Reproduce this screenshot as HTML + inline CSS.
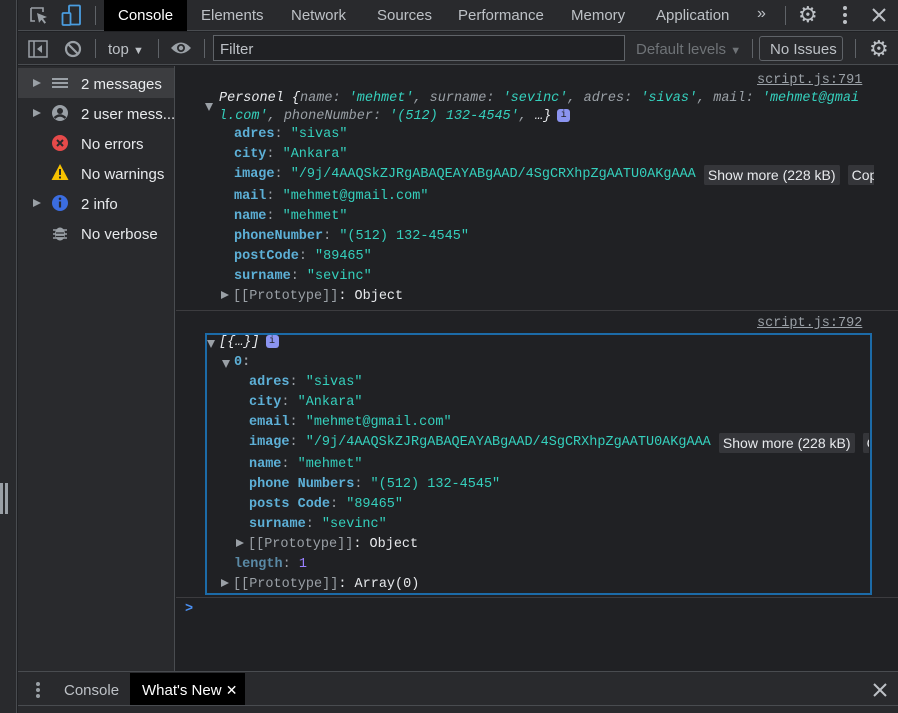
<!DOCTYPE html>
<html><head><meta charset="utf-8"><style>
*{margin:0;padding:0;box-sizing:border-box}
body{width:898px;height:713px;background:#202124;position:relative;overflow:hidden;font-family:"Liberation Sans",sans-serif;color:#e8eaed}
.a{position:absolute}
.ui{font-size:15px;color:#bdc1c6;white-space:nowrap}
.m{font-family:"Liberation Mono",monospace;font-size:13.5px;white-space:nowrap;line-height:20px;height:20px;position:absolute}
.k{color:#5db0d7;font-weight:bold}
.s{color:#35d0bd}
.p{color:#9aa0a6}
.w{color:#e8eaed}
.it{font-style:italic}
.kg{color:#9aa0a6;font-style:italic}
.tri{display:inline-block;width:0;height:0;border-left:4.5px solid transparent;border-right:4.5px solid transparent;border-top:8px solid #9aa0a6;margin-right:4px;vertical-align:middle}
.trr{display:inline-block;width:0;height:0;border-top:4.5px solid transparent;border-bottom:4.5px solid transparent;border-left:8px solid #9aa0a6;margin-right:4px;vertical-align:middle}
.btn{background:#35363a;color:#e8eaed;font-family:"Liberation Sans",sans-serif;font-size:14px;border-radius:3px;padding:2px 4px;display:inline-block;line-height:18px;vertical-align:top;margin-top:-1px}
.info{display:inline-block;width:13px;height:13px;background:#8b94f0;border-radius:3px;color:#202124;font-size:10px;text-align:center;line-height:13px;vertical-align:middle;font-family:"Liberation Mono",monospace;margin-left:6px}
</style></head><body>
<div class="a" style="left:0;top:0;width:17px;height:713px;background:#292a2d;border-right:1px solid #494c50"></div>
<div class="a" style="left:0;top:483px;width:3px;height:31px;background:#9aa0a6"></div>
<div class="a" style="left:5px;top:483px;width:3px;height:31px;background:#9aa0a6"></div>
<div class="a" style="left:18px;top:0;width:880px;height:31px;background:#292a2d;border-bottom:1px solid #494c50"></div>
<svg class="a" style="left:28px;top:5px" width="22" height="22" viewBox="0 0 22 22"><path d="M3 3h12v4M3 3v13h4" fill="none" stroke="#9aa0a6" stroke-width="1.6"/><path d="M9 8l10 4-4 1.5 3 4-1.5 1.2-3-4-2.5 3z" fill="#9aa0a6"/></svg>
<svg class="a" style="left:60px;top:4px" width="24" height="24" viewBox="0 0 24 24"><rect x="9" y="1.5" width="11" height="19" rx="1" fill="none" stroke="#4a9de0" stroke-width="1.8"/><rect x="2.5" y="9" width="8" height="12" rx="1" fill="#292a2d" stroke="#4a9de0" stroke-width="1.8"/></svg>
<div class="a" style="left:95px;top:6px;width:1px;height:19px;background:#5f6368"></div>
<div class="a" style="left:104px;top:0;width:83px;height:31px;background:#000"></div>
<div class="a ui" style="left:118px;top:7px;color:#fff">Console</div>
<div class="a ui" style="left:201px;top:7px">Elements</div>
<div class="a ui" style="left:291px;top:7px">Network</div>
<div class="a ui" style="left:377px;top:7px">Sources</div>
<div class="a ui" style="left:458px;top:7px">Performance</div>
<div class="a ui" style="left:571px;top:7px">Memory</div>
<div class="a ui" style="left:656px;top:7px">Application</div>
<div class="a ui" style="left:757px;top:5px;font-size:16px">»</div>
<div class="a" style="left:785px;top:6px;width:1px;height:19px;background:#5f6368"></div>
<div class="a ui" style="left:798px;top:2px;font-size:22px;color:#bdc1c6">⚙</div>
<div class="a" style="left:843px;top:6px;width:4px;height:4px;border-radius:2px;background:#bdc1c6;box-shadow:0 7px 0 #bdc1c6,0 14px 0 #bdc1c6"></div>
<svg class="a" style="left:871px;top:7px" width="16" height="16"><path d="M2 2L14 14M14 2L2 14" stroke="#bdc1c6" stroke-width="2"/></svg>
<div class="a" style="left:18px;top:32px;width:880px;height:33px;background:#292a2d;border-bottom:1px solid #494c50"></div>
<svg class="a" style="left:28px;top:40px" width="20" height="18"><rect x="1" y="1" width="18" height="16" fill="none" stroke="#9aa0a6" stroke-width="1.5"/><path d="M6 1v16" stroke="#9aa0a6" stroke-width="1.5"/><path d="M14 5l-5 4 5 4z" fill="#9aa0a6"/></svg>
<svg class="a" style="left:64px;top:40px" width="18" height="18"><circle cx="9" cy="9" r="7" fill="none" stroke="#9aa0a6" stroke-width="2.2"/><path d="M4 4l10 10" stroke="#9aa0a6" stroke-width="2.2"/></svg>
<div class="a" style="left:95px;top:39px;width:1px;height:19px;background:#5f6368"></div>
<div class="a ui" style="left:108px;top:41px">top <span style="font-size:11px">▼</span></div>
<div class="a" style="left:158px;top:39px;width:1px;height:19px;background:#5f6368"></div>
<svg class="a" style="left:170px;top:40px" width="22" height="16"><path d="M1 8Q11 -3 21 8Q11 19 1 8z" fill="#9aa0a6"/><circle cx="11" cy="8" r="4" fill="#292a2d"/><circle cx="11" cy="8" r="2.2" fill="#9aa0a6"/></svg>
<div class="a" style="left:204px;top:39px;width:1px;height:19px;background:#5f6368"></div>
<div class="a" style="left:213px;top:35px;width:412px;height:26px;border:1px solid #5f6368;background:#202124"></div>
<div class="a ui" style="left:220px;top:41px;color:#bdc1c6">Filter</div>
<div class="a ui" style="left:636px;top:41px;color:#6f7377">Default levels <span style="font-size:11px">▼</span></div>
<div class="a" style="left:752px;top:39px;width:1px;height:19px;background:#5f6368"></div>
<div class="a" style="left:759px;top:36px;width:84px;height:25px;border:1px solid #5f6368;border-radius:3px"></div>
<div class="a ui" style="left:770px;top:41px">No Issues</div>
<div class="a" style="left:855px;top:39px;width:1px;height:19px;background:#5f6368"></div>
<div class="a ui" style="left:869px;top:36px;font-size:22px">⚙</div>
<div class="a" style="left:18px;top:66px;width:157px;height:605px;background:#292a2d;border-right:1px solid #494c50"></div>
<div class="a" style="left:18px;top:68px;width:156px;height:30px;background:#3c3d40"></div>
<div class="a trr" style="left:33px;top:79px"></div>
<div class="a" style="left:52px;top:78px;width:16px;height:10px;border-top:2px solid #9aa0a6;border-bottom:2px solid #9aa0a6"></div><div class="a" style="left:52px;top:82px;width:16px;height:2px;background:#9aa0a6"></div>
<div class="a ui" style="left:81px;top:76px;color:#e8eaed">2 messages</div>
<div class="a trr" style="left:33px;top:109px"></div>
<svg class="a" style="left:51px;top:104px" width="18" height="18"><circle cx="9" cy="9" r="8" fill="#9aa0a6"/><circle cx="9" cy="7" r="3" fill="#292a2d"/><path d="M3.5 14Q9 9 14.5 14" fill="none" stroke="#292a2d" stroke-width="2.5"/></svg>
<div class="a ui" style="left:81px;top:106px;color:#e8eaed">2 user mess...</div>
<svg class="a" style="left:51px;top:134px" width="18" height="18"><circle cx="9" cy="9" r="8" fill="#e64a4a"/><path d="M6 6l6 6M12 6l-6 6" stroke="#292a2d" stroke-width="2"/></svg>
<div class="a ui" style="left:81px;top:136px;color:#e8eaed">No errors</div>
<svg class="a" style="left:51px;top:163px" width="18" height="18"><path d="M9 1L17.5 17H0.5z" fill="#f7c200"/><path d="M9 6v6M9 13.5v2" stroke="#292a2d" stroke-width="2"/></svg>
<div class="a ui" style="left:81px;top:166px;color:#e8eaed">No warnings</div>
<div class="a trr" style="left:33px;top:199px"></div>
<svg class="a" style="left:51px;top:194px" width="18" height="18"><circle cx="9" cy="9" r="8" fill="#3b6de0"/><path d="M9 7.5v6" stroke="#292a2d" stroke-width="2.2"/><circle cx="9" cy="4.8" r="1.3" fill="#292a2d"/></svg>
<div class="a ui" style="left:81px;top:196px;color:#e8eaed">2 info</div>
<svg class="a" style="left:51px;top:224px" width="18" height="18"><ellipse cx="9" cy="10" rx="5" ry="6.5" fill="#9aa0a6"/><path d="M2 6h14M2 10h14M2 14h14" stroke="#9aa0a6" stroke-width="1.6"/><path d="M5 9h8M5 12.5h8" stroke="#292a2d" stroke-width="1.3"/></svg>
<div class="a ui" style="left:81px;top:226px;color:#e8eaed">No verbose</div>
<div class="m" style="left:757px;top:71px;color:#9aa0a6;text-decoration:underline">script.js:791</div>
<div class="a tri" style="left:205px;top:103px"></div>
<div class="m it" style="left:219px;top:89px"><span class="w">Personel </span><span class="w">{</span><span class="kg">name</span><span class="p">: </span><span class="s">'mehmet'</span><span class="p">, </span><span class="kg">surname</span><span class="p">: </span><span class="s">'sevinc'</span><span class="p">, </span><span class="kg">adres</span><span class="p">: </span><span class="s">'sivas'</span><span class="p">, </span><span class="kg">mail</span><span class="p">: </span><span class="s">'mehmet@gmai</span></div>
<div class="m it" style="left:219px;top:107px"><span class="s">l.com'</span><span class="p">, </span><span class="kg">phoneNumber</span><span class="p">: </span><span class="s">'(512) 132-4545'</span><span class="p">, </span><span class="w">…}</span><span class="info" style="font-style:normal">i</span></div>
<div class="m" style="left:234px;top:125px"><span class="k">adres</span><span class="p">: </span><span class="s">"sivas"</span></div>
<div class="m" style="left:234px;top:145px"><span class="k">city</span><span class="p">: </span><span class="s">"Ankara"</span></div>
<div class="m" style="left:234px;top:165px;width:640px;overflow:hidden"><span class="k">image</span><span class="p">: </span><span class="s">"/9j/4AAQSkZJRgABAQEAYABgAAD/4SgCRXhpZgAATU0AKgAAA</span> <span class="btn">Show more (228 kB)</span> <span class="btn">Copy</span></div>
<div class="m" style="left:234px;top:187px"><span class="k">mail</span><span class="p">: </span><span class="s">"mehmet@gmail.com"</span></div>
<div class="m" style="left:234px;top:207px"><span class="k">name</span><span class="p">: </span><span class="s">"mehmet"</span></div>
<div class="m" style="left:234px;top:227px"><span class="k">phoneNumber</span><span class="p">: </span><span class="s">"(512) 132-4545"</span></div>
<div class="m" style="left:234px;top:247px"><span class="k">postCode</span><span class="p">: </span><span class="s">"89465"</span></div>
<div class="m" style="left:234px;top:267px"><span class="k">surname</span><span class="p">: </span><span class="s">"sevinc"</span></div>
<div class="m" style="left:221px;top:287px"><span class="trr"></span><span class="p">[[Prototype]]</span><span class="w">: Object</span></div>
<div class="a" style="left:176px;top:310px;width:722px;height:1px;background:#3c3c3f"></div>
<div class="m" style="left:757px;top:314px;color:#9aa0a6;text-decoration:underline">script.js:792</div>
<div class="a" style="left:205px;top:333px;width:667px;height:262px;border:2px solid #1c6ba8"></div>
<div class="a tri" style="left:207px;top:340px"></div>
<div class="m it w" style="left:219px;top:333px">[{…}]<span class="info" style="font-style:normal">i</span></div>
<div class="a tri" style="left:222px;top:360px"></div>
<div class="m k" style="left:234px;top:353px">0<span class="p">:</span></div>
<div class="m" style="left:249px;top:373px"><span class="k">adres</span><span class="p">: </span><span class="s">"sivas"</span></div>
<div class="m" style="left:249px;top:393px"><span class="k">city</span><span class="p">: </span><span class="s">"Ankara"</span></div>
<div class="m" style="left:249px;top:413px"><span class="k">email</span><span class="p">: </span><span class="s">"mehmet@gmail.com"</span></div>
<div class="m" style="left:249px;top:433px;width:620px;overflow:hidden"><span class="k">image</span><span class="p">: </span><span class="s">"/9j/4AAQSkZJRgABAQEAYABgAAD/4SgCRXhpZgAATU0AKgAAA</span> <span class="btn">Show more (228 kB)</span> <span class="btn">Copy</span></div>
<div class="m" style="left:249px;top:455px"><span class="k">name</span><span class="p">: </span><span class="s">"mehmet"</span></div>
<div class="m" style="left:249px;top:475px"><span class="k">phone Numbers</span><span class="p">: </span><span class="s">"(512) 132-4545"</span></div>
<div class="m" style="left:249px;top:495px"><span class="k">posts Code</span><span class="p">: </span><span class="s">"89465"</span></div>
<div class="m" style="left:249px;top:515px"><span class="k">surname</span><span class="p">: </span><span class="s">"sevinc"</span></div>
<div class="m" style="left:236px;top:535px"><span class="trr"></span><span class="p">[[Prototype]]</span><span class="w">: Object</span></div>
<div class="m" style="left:234px;top:555px"><span style="color:#5a8aa6;font-weight:bold">length</span><span class="p">: </span><span style="color:#9980ff">1</span></div>
<div class="m" style="left:221px;top:575px"><span class="trr"></span><span class="p">[[Prototype]]</span><span class="w">: Array(0)</span></div>
<div class="a" style="left:176px;top:597px;width:722px;height:1px;background:#3c3c3f"></div>
<div class="m" style="left:185px;top:600px;color:#4a8ff0;font-weight:bold">&gt;</div>
<div class="a" style="left:18px;top:671px;width:880px;height:42px;background:#292a2d;border-top:1px solid #494c50"></div>
<div class="a" style="left:18px;top:705px;width:880px;height:1px;background:#494c50"></div>
<div class="a" style="left:36px;top:682px;width:4px;height:4px;border-radius:2px;background:#9aa0a6;box-shadow:0 6px 0 #9aa0a6,0 12px 0 #9aa0a6"></div>
<div class="a ui" style="left:64px;top:682px">Console</div>
<div class="a" style="left:130px;top:673px;width:115px;height:32px;background:#000"></div>
<div class="a ui" style="left:142px;top:682px;color:#fff">What's New <span style="font-size:14px">✕</span></div>
<svg class="a" style="left:873px;top:683px" width="14" height="14"><path d="M1 1L13 13M13 1L1 13" stroke="#bdc1c6" stroke-width="2"/></svg>
</body></html>
